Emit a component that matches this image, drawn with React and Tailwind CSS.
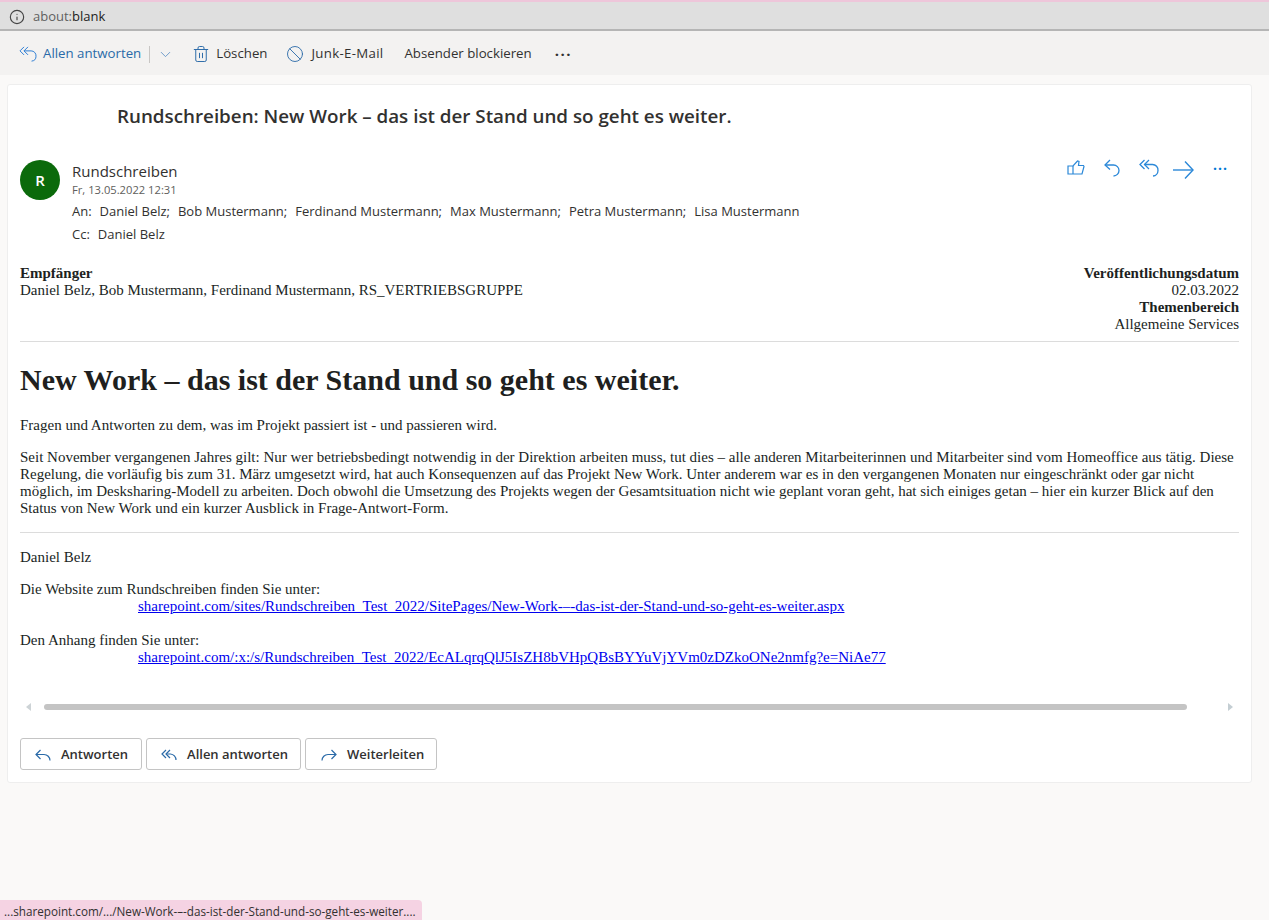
import { Info, ChevronDown, Trash2, Ban } from "lucide-react"

const ui = "font-['Open_Sans','Noto_Sans',sans-serif]"

const ReplyIcon = ({ className = "" }) => (
  <svg viewBox="0 0 16 18" fill="none" stroke="currentColor" strokeWidth="1.3" className={className}>
    <path d="M6 1 1 6l5 4.5" />
    <path d="M1 6h8.5a5.5 5.5 0 0 1 5.5 5.5 5.5 5.5 0 0 1-5.5 5.5" />
  </svg>
)

const ReplyAllIcon = ({ className = "", strokeWidth = 1.3 }) => (
  <svg viewBox="0 0 20 18" fill="none" stroke="currentColor" strokeWidth={strokeWidth} className={className}>
    <path d="M5.5 1 1 5.5 5.5 10" />
    <path d="M10 1 5.5 5.5 10 10" />
    <path d="M5.5 5.5h8a5.5 5.5 0 0 1 5.5 6 5.5 5.5 0 0 1-5 5.5" />
  </svg>
)

const LikeIcon = ({ className = "" }) => (
  <svg viewBox="0 0 18 15" fill="none" stroke="currentColor" strokeWidth="1.2" className={className}>
    <path d="M1 6h5l4.5-5 1.5.5-.5 4h5l.5 1-2 7.5H1z" />
    <path d="M6 6v8" />
  </svg>
)

const Recipient = ({ children }) => <span className="mr-[8px]">{children}</span>

const ActionButton = ({ icon, label, padding = "pl-[14px] pr-[13px]" }) => (
  <button className={`h-[32px] pt-[1px] flex items-center gap-[10px] ${padding} rounded-[3px] border border-[#c4c4c4] bg-white text-[13px] font-semibold text-[#323130]`}>
    {icon}
    {label}
  </button>
)

export default function App() {
  return (
    <div className={`${ui} min-h-[920px] bg-[#faf9f8] relative overflow-hidden`}>
      <div className="h-[2px] bg-[#eec6da]" />
      <div className="h-[27px] bg-[#dfdfdf] flex items-center pl-[9px] pt-[2px] gap-[8px] text-[13px] text-[#5f5f5f]">
        <Info className="w-[16px] h-[16px] text-[#444]" strokeWidth={1.7} />
        <span>about:<span className="text-[#222]">blank</span></span>
      </div>
      <div className="h-[2px] bg-[#b5b5b5]" />

      <div className="h-[44px] pt-[2px] bg-[#f3f2f1] flex items-center pl-[19px] text-[13.25px] text-[#323130]">
        <div className="flex items-center gap-[6px] text-[#2a6aa8]">
          <ReplyAllIcon className="w-[18px] h-[16px] text-[#2b7cd3]" strokeWidth={1.1} />
          <span>Allen antworten</span>
        </div>
        <div className="w-px h-[17px] bg-[#c8c6c4] ml-[8px]" />
        <ChevronDown className="w-[17px] h-[17px] ml-[7px] text-[#5a8fc4]" strokeWidth={1.2} />
        <div className="flex items-center gap-[6px] ml-[18px]">
          <Trash2 className="w-[18px] h-[18px] text-[#2a6aa8]" strokeWidth={1.3} />
          <span>Löschen</span>
        </div>
        <div className="flex items-center gap-[7px] ml-[19px]">
          <Ban className="w-[18px] h-[18px] text-[#2a6aa8]" strokeWidth={1.2} />
          <span className="tracking-[0.3px]">Junk-E-Mail</span>
        </div>
        <span className="ml-[21px]">Absender blockieren</span>
        <span className="ml-[23px] text-[15px] leading-none tracking-[1.5px] -mt-[8px] font-bold">...</span>
      </div>

      <div className="ml-[7px] mt-[9px] w-[1245px] h-[699px] bg-white border border-[#eeeeee] rounded-[3px] pl-[12px] pr-[12px]">
        <h1 className="pl-[97px] pt-[17px] text-[18.8px] leading-[28px] font-semibold text-[#323130]">
          Rundschreiben: New Work – das ist der Stand und so geht es weiter.
        </h1>

        <div className="flex mt-[27px]">
          <div className="w-[40px] h-[40px] mt-[3px] rounded-full bg-[#0b6a0b] text-white text-[15px] font-semibold flex items-center justify-center shrink-0">
            R
          </div>
          <div className="ml-[12px] flex-1 text-[13px] text-[#323130]">
            <div className="flex justify-between">
              <div>
                <div className="text-[15px] leading-[22px] mt-[3px]">Rundschreiben</div>
                <div className="text-[11.2px] leading-[14px] mt-[1px] text-[#605e5c]">Fr, 13.05.2022 12:31</div>
              </div>
              <div className="flex items-start text-[#2b88d8] mr-[13px] pt-[2px]">
                <LikeIcon className="w-[18px] h-[15px] mt-[1px]" />
                <ReplyIcon className="w-[16px] h-[18px] ml-[19px]" />
                <ReplyAllIcon className="w-[20px] h-[18px] ml-[19px]" />
                <svg viewBox="0 0 21 20" fill="none" stroke="currentColor" strokeWidth="1.4" className="w-[21px] h-[20px] ml-[14px] mt-[1px]">
                  <path d="M0 10h20" />
                  <path d="M12 1.5 20 10l-8 8.5" />
                </svg>
                <span className="text-[#0078d4] font-bold text-[14px] leading-none -mt-[1px] ml-[19px] w-[13px] tracking-[1px]">...</span>
              </div>
            </div>
            <div className="mt-[5px] leading-[18px]">
              <span className="mr-[8px]">An:</span>
              <Recipient>Daniel Belz;</Recipient>
              <Recipient>Bob Mustermann;</Recipient>
              <Recipient>Ferdinand Mustermann;</Recipient>
              <Recipient>Max Mustermann;</Recipient>
              <Recipient>Petra Mustermann;</Recipient>
              <Recipient>Lisa Mustermann</Recipient>
            </div>
            <div className="mt-[5px] leading-[18px]">
              <span className="mr-[8px]">Cc:</span>Daniel Belz
            </div>
          </div>
        </div>

        <div className="font-['Liberation_Serif',serif] text-[15px] leading-[17px] text-[#201f1e]">
          <div className="flex justify-between mt-[22px] pb-[8px] border-b border-[#dcdcdc]">
            <div>
              <div className="font-bold">Empfänger</div>
              <div>Daniel Belz, Bob Mustermann, Ferdinand Mustermann, RS_VERTRIEBSGRUPPE</div>
            </div>
            <div className="text-right">
              <div className="font-bold">Veröffentlichungsdatum</div>
              <div>02.03.2022</div>
              <div className="font-bold">Themenbereich</div>
              <div>Allgemeine Services</div>
            </div>
          </div>

          <h2 className="text-[30px] leading-[34px] font-bold mt-[21px]">
            New Work – das ist der Stand und so geht es weiter.
          </h2>
          <p className="mt-[20px]">Fragen und Antworten zu dem, was im Projekt passiert ist - und passieren wird.</p>
          <p className="mt-[15px]">
            Seit November vergangenen Jahres gilt: Nur wer betriebsbedingt notwendig in der Direktion arbeiten muss, tut dies – alle anderen Mitarbeiterinnen und Mitarbeiter sind vom Homeoffice aus tätig. Diese Regelung, die vorläufig bis zum 31. März umgesetzt wird, hat auch Konsequenzen auf das Projekt New Work. Unter anderem war es in den vergangenen Monaten nur eingeschränkt oder gar nicht möglich, im Desksharing-Modell zu arbeiten. Doch obwohl die Umsetzung des Projekts wegen der Gesamtsituation nicht wie geplant voran geht, hat sich einiges getan – hier ein kurzer Blick auf den Status von New Work und ein kurzer Ausblick in Frage-Antwort-Form.
          </p>
          <hr className="mt-[15px] border-[#dcdcdc]" />
          <p className="mt-[16px]">Daniel Belz</p>
          <p className="mt-[15px]">Die Website zum Rundschreiben finden Sie unter:</p>
          <a className="block pl-[118px] text-[#0000ee] underline" href="#a">
            sharepoint.com/sites/Rundschreiben_Test_2022/SitePages/New-Work-–-das-ist-der-Stand-und-so-geht-es-weiter.aspx
          </a>
          <p className="mt-[17px]">Den Anhang finden Sie unter:</p>
          <a className="block pl-[118px] text-[#0000ee] underline" href="#b">
            sharepoint.com/:x:/s/Rundschreiben_Test_2022/EcALqrqQlJ5IsZH8bVHpQBsBYYuVjYVm0zDZkoONe2nmfg?e=NiAe77
          </a>
        </div>

        <div className="flex items-center mt-[33px] h-[16px]">
          <div className="w-0 h-0 ml-[6px] border-y-[4px] border-y-transparent border-r-[5px] border-r-[#cdd3d6]" />
          <div className="w-[1143px] h-[6px] ml-[13px] rounded-full bg-[#c4c4c4]" />
          <div className="w-0 h-0 ml-[41px] border-y-[4px] border-y-transparent border-l-[5px] border-l-[#c4ced3]" />
        </div>

        <div className="flex gap-[4px] mt-[23px]">
          <ActionButton
            icon={
              <svg viewBox="0 0 16 12" fill="none" stroke="currentColor" strokeWidth="1.2" className="w-[16px] h-[12px] text-[#2a6aa8]">
                <path d="M5.5 1 1 5.5 5.5 10" />
                <path d="M1 5.5h8a6 6 0 0 1 6 6" />
              </svg>
            }
            label="Antworten"
          />
          <ActionButton
            icon={
              <svg viewBox="0 0 16 12" fill="none" stroke="currentColor" strokeWidth="1.2" className="w-[16px] h-[12px] text-[#2a6aa8]">
                <path d="M5 1 1 5l4 4" />
                <path d="M9 1 5 5l4 4" />
                <path d="M5 5h4.5a6 6 0 0 1 5.5 6" />
              </svg>
            }
            label="Allen antworten"
            padding="pl-[14px] pr-[12px]"
          />
          <ActionButton
            icon={
              <svg viewBox="0 0 16 12" fill="none" stroke="currentColor" strokeWidth="1.2" className="w-[16px] h-[12px] text-[#2a6aa8]">
                <path d="M10.5 1 15 5.5 10.5 10" />
                <path d="M15 5.5H7a6 6 0 0 0-6 6" />
              </svg>
            }
            label="Weiterleiten"
            padding="pl-[15px] pr-[12px]"
          />
        </div>
      </div>

      <div className="absolute left-0 bottom-0 h-[20px] w-[422px] bg-[#f5d3e3] rounded-tr-[4px] pl-[4px] text-[11.7px] leading-[22px] text-[#323130] whitespace-nowrap">
        ...sharepoint.com/.../New-Work-–-das-ist-der-Stand-und-so-geht-es-weiter....
      </div>
    </div>
  )
}
